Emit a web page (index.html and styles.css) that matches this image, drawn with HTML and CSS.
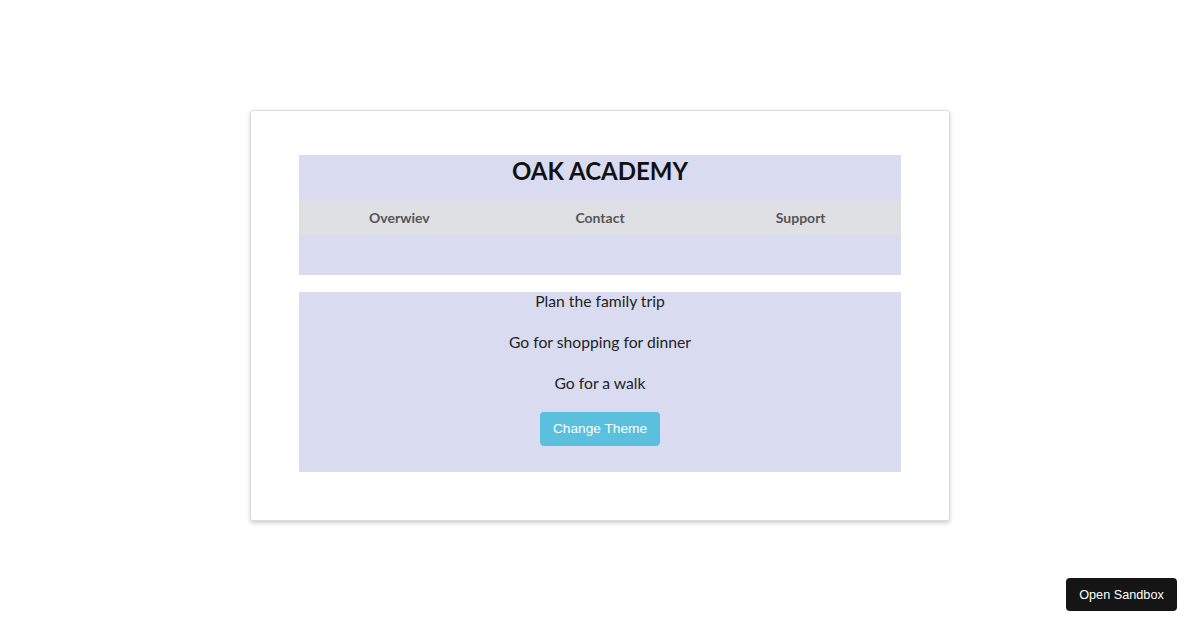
FILE: index.html
```html
<!DOCTYPE html>
<html>
<head>
<meta charset="utf-8">
<link rel="stylesheet" href="styles.css">
</head>
<body>
<div class="page">
  <div class="card">
    <header class="header">
      <h1 class="title">OAK ACADEMY</h1>
      <nav class="nav">
        <a class="nav-item">Overwiev</a>
        <a class="nav-item">Contact</a>
        <a class="nav-item">Support</a>
      </nav>
    </header>
    <section class="todos">
      <p class="todo">Plan the family trip</p>
      <p class="todo">Go for shopping for dinner</p>
      <p class="todo">Go for a walk</p>
      <button class="theme-btn">Change Theme</button>
    </section>
  </div>
</div>
<button class="sandbox-btn">Open Sandbox</button>
</body>
</html>
```
FILE: styles.css
```css
html, body {
  margin: 0;
  padding: 0;
  background: #ffffff;
}
body {
  font-family: Lato, "Liberation Sans", sans-serif;
}
.page {
  height: 100vh;
  display: flex;
  align-items: center;
  justify-content: center;
}
.card {
  width: 700px;
  height: 411px;
  box-sizing: border-box;
  border: 1px solid #dcdcdc;
  border-radius: 3px;
  box-shadow: 0 2px 4px rgba(0, 0, 0, 0.2);
  padding: 44px 48px 48px;
  display: flex;
  flex-direction: column;
}
.header {
  background: #d9dcf0;
  height: 120px;
  display: flex;
  flex-direction: column;
}
.title {
  margin: 0;
  height: 45px;
  line-height: 32px;
  font-size: 24px;
  font-weight: 700;
  text-align: center;
  color: #111;
}
.nav {
  height: 35px;
  background: #dfe0e3;
  display: grid;
  grid-template-columns: 1fr 1fr 1fr;
  align-items: center;
}
.nav-item {
  text-align: center;
  font-size: 14px;
  font-weight: 700;
  color: #555;
}
.todos {
  margin-top: 17px;
  background: #d9dcf0;
  height: 180px;
  display: flex;
  flex-direction: column;
  align-items: center;
}
.todo {
  margin: 0 0 23px;
  font-size: 15.7px;
  line-height: 18px;
  color: #222;
}
.todo:nth-of-type(3) {
  margin-bottom: 20px;
}
.theme-btn {
  width: 120px;
  height: 34px;
  border: none;
  border-radius: 4px;
  background: #5bc0de;
  color: #fff;
  font-family: "Liberation Sans", Arial, sans-serif;
  font-size: 13.7px;
  padding: 0;
}
.sandbox-btn {
  position: fixed;
  right: 23px;
  bottom: 19px;
  width: 111px;
  height: 33px;
  border: none;
  border-radius: 4px;
  background: #151515;
  color: #fff;
  font-family: "Liberation Sans", Arial, sans-serif;
  font-size: 12.7px;
  padding: 0;
}
```
